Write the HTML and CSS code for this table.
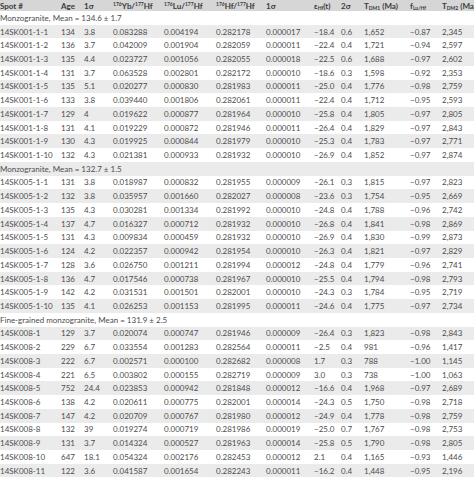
FILE: index.html
```html
<!DOCTYPE html>
<html>
<head>
<meta charset="utf-8">
<link rel="stylesheet" href="styles.css">
</head>
<body>
<div class="table">
<div class="row head">
<span>Spot #</span><span>Age</span><span>1σ</span>
<span><sup>176</sup>Yb/<sup>177</sup>Hf</span>
<span><sup>176</sup>Lu/<sup>177</sup>Hf</span>
<span><sup>176</sup>Hf/<sup>177</sup>Hf</span>
<span>1σ</span>
<span>ε<sub>Hf</sub>(t)</span>
<span>2σ</span>
<span>T<sub>DM1</sub> (Ma)</span>
<span>f<sub>Lu/Hf</sub></span>
<span>T<sub>DM2</sub> (Ma)</span>
</div>
<div class="body">
<div class="row group"><span>Monzogranite, Mean = 134.6 ± 1.7</span></div>
<div class="row"><span>14SK001-1-1</span><span>134</span><span>3.8</span><span>0.083288</span><span>0.004194</span><span>0.282178</span><span>0.000017</span><span>−18.4</span><span>0.6</span><span>1,652</span><span>−0.87</span><span>2,345</span></div>
<div class="row"><span>14SK001-1-2</span><span>136</span><span>3.7</span><span>0.042009</span><span>0.001904</span><span>0.282059</span><span>0.000011</span><span>−22.4</span><span>0.4</span><span>1,721</span><span>−0.94</span><span>2,597</span></div>
<div class="row"><span>14SK001-1-3</span><span>135</span><span>4.4</span><span>0.023727</span><span>0.001056</span><span>0.282055</span><span>0.000018</span><span>−22.5</span><span>0.6</span><span>1,688</span><span>−0.97</span><span>2,602</span></div>
<div class="row"><span>14SK001-1-4</span><span>131</span><span>3.7</span><span>0.063528</span><span>0.002801</span><span>0.282172</span><span>0.000010</span><span>−18.6</span><span>0.3</span><span>1,598</span><span>−0.92</span><span>2,353</span></div>
<div class="row"><span>14SK001-1-5</span><span>135</span><span>5.1</span><span>0.020277</span><span>0.000830</span><span>0.281983</span><span>0.000011</span><span>−25.0</span><span>0.4</span><span>1,776</span><span>−0.98</span><span>2,759</span></div>
<div class="row"><span>14SK001-1-6</span><span>133</span><span>3.8</span><span>0.039440</span><span>0.001806</span><span>0.282061</span><span>0.000011</span><span>−22.4</span><span>0.4</span><span>1,712</span><span>−0.95</span><span>2,593</span></div>
<div class="row"><span>14SK001-1-7</span><span>129</span><span>4</span><span>0.019622</span><span>0.000877</span><span>0.281964</span><span>0.000010</span><span>−25.8</span><span>0.4</span><span>1,805</span><span>−0.97</span><span>2,805</span></div>
<div class="row"><span>14SK001-1-8</span><span>131</span><span>4.1</span><span>0.019229</span><span>0.000872</span><span>0.281946</span><span>0.000011</span><span>−26.4</span><span>0.4</span><span>1,829</span><span>−0.97</span><span>2,843</span></div>
<div class="row"><span>14SK001-1-9</span><span>130</span><span>4.3</span><span>0.019925</span><span>0.000844</span><span>0.281979</span><span>0.000010</span><span>−25.3</span><span>0.4</span><span>1,783</span><span>−0.97</span><span>2,771</span></div>
<div class="row"><span>14SK001-1-10</span><span>132</span><span>4.3</span><span>0.021381</span><span>0.000933</span><span>0.281932</span><span>0.000010</span><span>−26.9</span><span>0.4</span><span>1,852</span><span>−0.97</span><span>2,874</span></div>
<div class="row group"><span>Monzogranite, Mean = 132.7 ± 1.5</span></div>
<div class="row"><span>14SK005-1-1</span><span>131</span><span>3.8</span><span>0.018987</span><span>0.000832</span><span>0.281955</span><span>0.000009</span><span>−26.1</span><span>0.3</span><span>1,815</span><span>−0.97</span><span>2,823</span></div>
<div class="row"><span>14SK005-1-2</span><span>132</span><span>3.8</span><span>0.035957</span><span>0.001660</span><span>0.282027</span><span>0.000008</span><span>−23.6</span><span>0.3</span><span>1,754</span><span>−0.95</span><span>2,669</span></div>
<div class="row"><span>14SK005-1-3</span><span>135</span><span>4.3</span><span>0.030281</span><span>0.001334</span><span>0.281992</span><span>0.000010</span><span>−24.8</span><span>0.4</span><span>1,788</span><span>−0.96</span><span>2,742</span></div>
<div class="row"><span>14SK005-1-4</span><span>137</span><span>4.7</span><span>0.016327</span><span>0.000712</span><span>0.281932</span><span>0.000010</span><span>−26.8</span><span>0.4</span><span>1,841</span><span>−0.98</span><span>2,869</span></div>
<div class="row"><span>14SK005-1-5</span><span>131</span><span>4.3</span><span>0.009834</span><span>0.000459</span><span>0.281932</span><span>0.000010</span><span>−26.9</span><span>0.4</span><span>1,830</span><span>−0.99</span><span>2,873</span></div>
<div class="row"><span>14SK005-1-6</span><span>124</span><span>4.2</span><span>0.022357</span><span>0.000942</span><span>0.281954</span><span>0.000010</span><span>−26.3</span><span>0.4</span><span>1,821</span><span>−0.97</span><span>2,829</span></div>
<div class="row"><span>14SK005-1-7</span><span>128</span><span>3.6</span><span>0.026750</span><span>0.001211</span><span>0.281994</span><span>0.000012</span><span>−24.8</span><span>0.4</span><span>1,779</span><span>−0.96</span><span>2,741</span></div>
<div class="row"><span>14SK005-1-8</span><span>136</span><span>4.7</span><span>0.017546</span><span>0.000738</span><span>0.281967</span><span>0.000010</span><span>−25.5</span><span>0.4</span><span>1,794</span><span>−0.98</span><span>2,793</span></div>
<div class="row"><span>14SK005-1-9</span><span>142</span><span>4.2</span><span>0.031531</span><span>0.001501</span><span>0.282001</span><span>0.000010</span><span>−24.3</span><span>0.3</span><span>1,784</span><span>−0.95</span><span>2,719</span></div>
<div class="row"><span>14SK005-1-10</span><span>135</span><span>4.1</span><span>0.026253</span><span>0.001153</span><span>0.281995</span><span>0.000011</span><span>−24.6</span><span>0.4</span><span>1,775</span><span>−0.97</span><span>2,734</span></div>
<div class="row group"><span>Fine-grained monzogranite, Mean = 131.9 ± 2.5</span></div>
<div class="row"><span>14SK008-1</span><span>129</span><span>3.7</span><span>0.020074</span><span>0.000747</span><span>0.281946</span><span>0.000009</span><span>−26.4</span><span>0.3</span><span>1,823</span><span>−0.98</span><span>2,843</span></div>
<div class="row"><span>14SK008-2</span><span>229</span><span>6.7</span><span>0.033554</span><span>0.001283</span><span>0.282564</span><span>0.000011</span><span>−2.5</span><span>0.4</span><span>981</span><span>−0.96</span><span>1,417</span></div>
<div class="row"><span>14SK008-3</span><span>222</span><span>6.7</span><span>0.002571</span><span>0.000100</span><span>0.282682</span><span>0.000008</span><span>1.7</span><span>0.3</span><span>788</span><span>−1.00</span><span>1,145</span></div>
<div class="row"><span>14SK008-4</span><span>221</span><span>6.5</span><span>0.003802</span><span>0.000155</span><span>0.282719</span><span>0.000009</span><span>3.0</span><span>0.3</span><span>738</span><span>−1.00</span><span>1,063</span></div>
<div class="row"><span>14SK008-5</span><span>752</span><span>24.4</span><span>0.023853</span><span>0.000942</span><span>0.281848</span><span>0.000012</span><span>−16.6</span><span>0.4</span><span>1,968</span><span>−0.97</span><span>2,689</span></div>
<div class="row"><span>14SK008-6</span><span>138</span><span>4.2</span><span>0.020611</span><span>0.000775</span><span>0.282001</span><span>0.000014</span><span>−24.3</span><span>0.5</span><span>1,750</span><span>−0.98</span><span>2,718</span></div>
<div class="row"><span>14SK008-7</span><span>147</span><span>4.2</span><span>0.020709</span><span>0.000767</span><span>0.281980</span><span>0.000012</span><span>−24.9</span><span>0.4</span><span>1,778</span><span>−0.98</span><span>2,759</span></div>
<div class="row"><span>14SK008-8</span><span>132</span><span>39</span><span>0.019274</span><span>0.000719</span><span>0.281986</span><span>0.000019</span><span>−25.0</span><span>0.7</span><span>1,767</span><span>−0.98</span><span>2,753</span></div>
<div class="row"><span>14SK008-9</span><span>131</span><span>3.7</span><span>0.014324</span><span>0.000527</span><span>0.281963</span><span>0.000014</span><span>−25.8</span><span>0.5</span><span>1,790</span><span>−0.98</span><span>2,805</span></div>
<div class="row"><span>14SK008-10</span><span>647</span><span>18.1</span><span>0.054324</span><span>0.002176</span><span>0.282453</span><span>0.000012</span><span>2.1</span><span>0.4</span><span>1,165</span><span>−0.93</span><span>1,446</span></div>
<div class="row"><span>14SK008-11</span><span>122</span><span>3.6</span><span>0.041587</span><span>0.001654</span><span>0.282243</span><span>0.000011</span><span>−16.2</span><span>0.4</span><span>1,448</span><span>−0.95</span><span>2,196</span></div>
</div>
</div>
</body>
</html>
```
FILE: styles.css
```css
html, body {
  margin: 0;
  padding: 0;
  background: #ffffff;
  overflow: hidden;
  width: 474px;
  height: 479px;
}
.table {
  width: 482px;
  font-family: Lato, "Open Sans", sans-serif;
  font-size: 8px;
  color: #4d4d4d;
}
.row {
  display: grid;
  grid-template-columns: 61px 23px 29px 51px 52px 50px 48px 27px 23px 46px 32px 40px;
  align-items: center;
  height: 13.72px;
  white-space: nowrap;
}
.head {
  height: 11px;
  background: #d6d6d6;
  font-weight: 700;
  color: #3a3a3a;
}
.body .row:nth-child(even) {
  background: #ebebeb;
}
.group > span {
  grid-column: 1 / -1;
}
.table sup, .table sub {
  font-size: 5px;
  line-height: 0;
  position: relative;
  vertical-align: baseline;
}
.table sup { top: -3px; }
.table sub { top: 1.5px; }
```
